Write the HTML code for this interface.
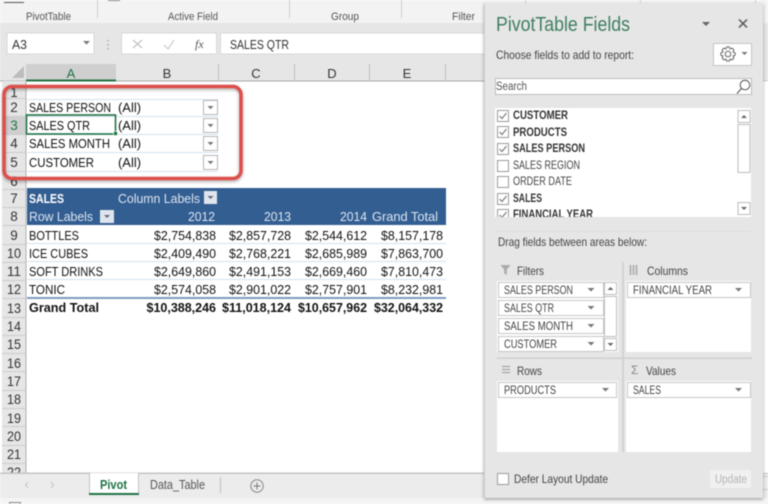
<!DOCTYPE html>
<html><head><meta charset="utf-8"><title>PivotTable</title>
<style>
html,body{margin:0;padding:0;background:#fff;width:768px;height:504px;overflow:hidden}
svg{display:block;filter:blur(.4px)}
text{font-family:"Liberation Sans",sans-serif;font-size:13px;fill:#333}
.d{fill:#111;font-size:13px}
.b{font-weight:bold;fill:#111;font-size:13px}
.w{fill:#fff}
.wb{fill:#fff;font-weight:bold}
.r{font-size:13.5px;fill:#333;text-anchor:middle}
.p{font-size:12px;fill:#444}
.pb{font-size:12px;fill:#333;font-weight:bold}
.rib{font-size:11px;fill:#555}
</style></head><body>
<svg width="768" height="504" viewBox="0 0 768 504" xmlns="http://www.w3.org/2000/svg">
<defs>
<g id="cb"><rect x=".5" y=".5" width="11" height="11" fill="#fff" stroke="#9a9a9a"/></g>
<g id="cc"><rect x=".5" y=".5" width="11" height="11" fill="#fff" stroke="#9a9a9a"/><path d="M2.5 6 L5 8.5 L9.5 3" fill="none" stroke="#777" stroke-width="1.1"/></g>
<g id="dd"><rect x=".5" y=".5" width="14" height="14" fill="#fff" stroke="#b5b5b5"/><path d="M4.5 6 h6 l-3 3.2z" fill="#777"/></g>
<g id="it"><path d="M0 0 h7 l-3.5 3.5z" fill="#777"/></g>
<filter id="sh" x="-10%" y="-10%" width="120%" height="120%"><feDropShadow dx="0" dy="1.5" stdDeviation="1.5" flood-color="#000" flood-opacity=".35"/></filter>
</defs>

<!-- Ribbon -->
<rect x="0" y="0" width="768" height="23" fill="#f3f3f3"/>
<rect x="0" y="23" width="768" height="41" fill="#e6e6e6"/>
<text class="rib" x="26" y="20" textLength="45" lengthAdjust="spacingAndGlyphs">PivotTable</text>
<text class="rib" x="168" y="20" textLength="50" lengthAdjust="spacingAndGlyphs">Active Field</text>
<text class="rib" x="331" y="20" textLength="28" lengthAdjust="spacingAndGlyphs">Group</text>
<text class="rib" x="452" y="20" textLength="23" lengthAdjust="spacingAndGlyphs">Filter</text>
<path d="M97.5 0V18M289.5 0V18M401.5 0V18M525.5 0V3M640.5 0V3M755.5 0V18" stroke="#cfcfcf"/>
<rect x="4" y="2" width="20" height="1" fill="#555"/><rect x="108" y="0" width="12" height="1" fill="#888"/>

<!-- Formula bar -->
<rect x="7" y="33" width="87" height="21" fill="#fff" stroke="#d8d8d8"/>
<text x="12" y="49" textLength="15" lengthAdjust="spacingAndGlyphs" fill="#444">A3</text>
<path d="M83 41 h7 l-3.5 3.5z" fill="#777"/>
<path d="M108 40v1.5M108 44v1.5M108 48v1.5" stroke="#aaa" stroke-width="1.5"/>
<rect x="121.5" y="33" width="95" height="21" fill="#fff" stroke="#d8d8d8"/>
<path d="M133 40 L142 48 M142 40 L133 48" stroke="#c4c4c4" stroke-width="1.3"/>
<path d="M164 45 L168 49 L174 40" stroke="#d0d0d0" stroke-width="1.3" fill="none"/>
<text x="195" y="48" style="font-family:'Liberation Serif',serif;font-style:italic;font-size:12px;fill:#555">fx</text>
<rect x="220.5" y="33" width="264" height="21" fill="#fff" stroke="#d8d8d8"/>
<text x="230" y="49" textLength="59" lengthAdjust="spacingAndGlyphs" fill="#444" style="font-size:12.5px">SALES QTR</text>

<!-- Column headers -->
<rect x="0" y="64" width="768" height="17" fill="#e6e6e6"/>
<rect x="0" y="80.5" width="768" height="1" fill="#a8a8a8"/>
<path d="M24 66 V78 H12z" fill="#bdbdbd"/>
<rect x="26" y="64" width="90" height="17" fill="#cfcfcf"/>
<rect x="26" y="79.5" width="90" height="2" fill="#217346"/>
<path d="M218.5 64V81M294.5 64V81M369.5 64V81M445.5 64V81" stroke="#bfbfbf"/>
<text x="71" y="78" text-anchor="middle" style="font-size:13px;fill:#217346">A</text>
<text x="167" y="78" text-anchor="middle">B</text>
<text x="256" y="78" text-anchor="middle">C</text>
<text x="332" y="78" text-anchor="middle">D</text>
<text x="407" y="78" text-anchor="middle">E</text>

<!-- Row header -->
<rect x="2" y="81" width="24" height="392" fill="#e6e6e6"/>
<rect x="25.5" y="81" width="1" height="392" fill="#b0b0b0"/>
<rect x="2" y="116" width="24" height="18" fill="#cfcfcf"/>
<path d="M2 98.5H26M2 116.5H26M2 134.5H26M2 152.5H26M2 171.5H26M2 189.5H26M2 207.5H26M2 225.5H26M2 244.5H26M2 262.5H26M2 280.5H26M2 298.5H26M2 317.5H26M2 335.5H26M2 353.5H26M2 371.5H26M2 390.5H26M2 408.5H26M2 426.5H26M2 445.5H26M2 463.5H26" stroke="#c9ccd0"/>
<text class="r" x="14" y="97">1</text>
<text class="r" x="14" y="112">2</text>
<text class="r" x="14" y="130" style="fill:#217346">3</text>
<text class="r" x="14" y="148">4</text>
<text class="r" x="14" y="167">5</text>
<text class="r" x="14" y="186">6</text>
<text class="r" x="14" y="203">7</text>
<text class="r" x="14" y="221">8</text>
<text class="r" x="14" y="240">9</text>
<text class="r" x="14" y="258" textLength="14" lengthAdjust="spacingAndGlyphs">10</text>
<text class="r" x="14" y="276" textLength="14" lengthAdjust="spacingAndGlyphs">11</text>
<text class="r" x="14" y="294" textLength="14" lengthAdjust="spacingAndGlyphs">12</text>
<text class="r" x="14" y="313" textLength="14" lengthAdjust="spacingAndGlyphs">13</text>
<text class="r" x="14" y="331" textLength="14" lengthAdjust="spacingAndGlyphs">14</text>
<text class="r" x="14" y="349" textLength="14" lengthAdjust="spacingAndGlyphs">15</text>
<text class="r" x="14" y="368" textLength="14" lengthAdjust="spacingAndGlyphs">16</text>
<text class="r" x="14" y="386" textLength="14" lengthAdjust="spacingAndGlyphs">17</text>
<text class="r" x="14" y="404" textLength="14" lengthAdjust="spacingAndGlyphs">18</text>
<text class="r" x="14" y="423" textLength="14" lengthAdjust="spacingAndGlyphs">19</text>
<text class="r" x="14" y="441" textLength="14" lengthAdjust="spacingAndGlyphs">20</text>
<text class="r" x="14" y="459" textLength="14" lengthAdjust="spacingAndGlyphs">21</text>
<text class="r" x="14" y="477" textLength="14" lengthAdjust="spacingAndGlyphs">22</text>

<!-- Filter area -->
<path d="M27 99.5H218M27 116.5H218M27 134.5H218M27 152.5H218M27 171.5H218" stroke="#d6e0ec"/>
<text class="d" x="29" y="112" textLength="82" lengthAdjust="spacingAndGlyphs">SALES PERSON</text>
<text class="d" x="29" y="130" textLength="61" lengthAdjust="spacingAndGlyphs">SALES QTR</text>
<text class="d" x="29" y="148" textLength="81" lengthAdjust="spacingAndGlyphs">SALES MONTH</text>
<text class="d" x="29" y="167" textLength="65" lengthAdjust="spacingAndGlyphs">CUSTOMER</text>
<text class="d" x="118" y="112" textLength="23" lengthAdjust="spacingAndGlyphs">(All)</text>
<text class="d" x="118" y="130" textLength="23" lengthAdjust="spacingAndGlyphs">(All)</text>
<text class="d" x="118" y="148" textLength="23" lengthAdjust="spacingAndGlyphs">(All)</text>
<text class="d" x="118" y="167" textLength="23" lengthAdjust="spacingAndGlyphs">(All)</text>
<use href="#dd" x="203" y="100"/>
<use href="#dd" x="203" y="118"/>
<use href="#dd" x="203" y="136"/>
<use href="#dd" x="203" y="155"/>
<rect x="26.5" y="115" width="89" height="19" fill="none" stroke="#217346" stroke-width="1.6"/>
<rect x="113.5" y="131.5" width="4" height="4" fill="#217346" stroke="#fff" stroke-width=".7"/>
<rect x="4" y="86.5" width="237" height="92" rx="8" fill="none" stroke="#dc4f4b" stroke-width="3.5" filter="url(#sh)"/>

<!-- Pivot table -->
<rect x="27" y="188" width="419" height="37" fill="#335e92"/>
<text class="wb" x="29" y="203" textLength="35" lengthAdjust="spacingAndGlyphs">SALES</text>
<text class="w" x="118" y="203" textLength="82" lengthAdjust="spacingAndGlyphs" style="fill:#dbe5f1">Column Labels</text>
<rect x="204" y="191" width="13" height="13" fill="#dfe5ec"/><path d="M207.5 196 h6 l-3 3z" fill="#667"/>
<text class="w" x="29" y="221" textLength="64" lengthAdjust="spacingAndGlyphs" style="fill:#dbe5f1">Row Labels</text>
<rect x="100" y="210" width="14" height="13" fill="#dfe5ec"/><path d="M104 215 h6 l-3 3z" fill="#667"/>
<text class="w" x="188" y="221" textLength="27" lengthAdjust="spacingAndGlyphs" style="fill:#dbe5f1">2012</text>
<text class="w" x="264" y="221" textLength="27" lengthAdjust="spacingAndGlyphs" style="fill:#dbe5f1">2013</text>
<text class="w" x="340" y="221" textLength="27" lengthAdjust="spacingAndGlyphs" style="fill:#dbe5f1">2014</text>
<text class="w" x="372" y="221" textLength="66" lengthAdjust="spacingAndGlyphs" style="fill:#dbe5f1">Grand Total</text>
<path d="M27 243.5H446M27 261.5H446M27 279.5H446" stroke="#d6e0ec"/>
<rect x="27" y="297" width="419" height="2" fill="#7e9cc2"/>

<text class="d" x="29" y="240" textLength="50" lengthAdjust="spacingAndGlyphs">BOTTLES</text>
<text class="d" x="29" y="258" textLength="59" lengthAdjust="spacingAndGlyphs">ICE CUBES</text>
<text class="d" x="29" y="276" textLength="74" lengthAdjust="spacingAndGlyphs">SOFT DRINKS</text>
<text class="d" x="29" y="294" textLength="36" lengthAdjust="spacingAndGlyphs">TONIC</text>
<text class="b" x="29" y="312" textLength="70" lengthAdjust="spacingAndGlyphs">Grand Total</text>

<text class="d" x="154" y="240" textLength="62" lengthAdjust="spacingAndGlyphs">$2,754,838</text>
<text class="d" x="229" y="240" textLength="62" lengthAdjust="spacingAndGlyphs">$2,857,728</text>
<text class="d" x="305" y="240" textLength="62" lengthAdjust="spacingAndGlyphs">$2,544,612</text>
<text class="d" x="381" y="240" textLength="62" lengthAdjust="spacingAndGlyphs">$8,157,178</text>
<text class="d" x="154" y="258" textLength="62" lengthAdjust="spacingAndGlyphs">$2,409,490</text>
<text class="d" x="229" y="258" textLength="62" lengthAdjust="spacingAndGlyphs">$2,768,221</text>
<text class="d" x="305" y="258" textLength="62" lengthAdjust="spacingAndGlyphs">$2,685,989</text>
<text class="d" x="381" y="258" textLength="62" lengthAdjust="spacingAndGlyphs">$7,863,700</text>
<text class="d" x="154" y="276" textLength="62" lengthAdjust="spacingAndGlyphs">$2,649,860</text>
<text class="d" x="229" y="276" textLength="62" lengthAdjust="spacingAndGlyphs">$2,491,153</text>
<text class="d" x="305" y="276" textLength="62" lengthAdjust="spacingAndGlyphs">$2,669,460</text>
<text class="d" x="381" y="276" textLength="62" lengthAdjust="spacingAndGlyphs">$7,810,473</text>
<text class="d" x="154" y="294" textLength="62" lengthAdjust="spacingAndGlyphs">$2,574,058</text>
<text class="d" x="229" y="294" textLength="62" lengthAdjust="spacingAndGlyphs">$2,901,022</text>
<text class="d" x="305" y="294" textLength="62" lengthAdjust="spacingAndGlyphs">$2,757,901</text>
<text class="d" x="381" y="294" textLength="62" lengthAdjust="spacingAndGlyphs">$8,232,981</text>
<text class="b" x="146.5" y="312" textLength="69.5" lengthAdjust="spacingAndGlyphs">$10,388,246</text>
<text class="b" x="222" y="312" textLength="69" lengthAdjust="spacingAndGlyphs">$11,018,124</text>
<text class="b" x="298" y="312" textLength="69" lengthAdjust="spacingAndGlyphs">$10,657,962</text>
<text class="b" x="374" y="312" textLength="69" lengthAdjust="spacingAndGlyphs">$32,064,332</text>

<!-- Sheet tabs -->
<rect x="0" y="473" width="768" height="31" fill="#ececec"/>
<rect x="0" y="472.5" width="768" height="1.5" fill="#c4c4c4"/>
<rect x="0" y="498" width="768" height="6" fill="#f4f4f4"/>
<rect x="9.5" y="502.5" width="11" height="4" fill="none" stroke="#888"/>
<path d="M28 482 l-2.5 3 l2.5 3M51 482 l2.5 3 l-2.5 3" fill="none" stroke="#c4c4c4" stroke-width="1"/>
<rect x="90" y="473" width="48" height="21" fill="#fff"/>
<path d="M89.5 473V494M138.5 473V494" stroke="#c4c4c4"/>
<rect x="89" y="493" width="50" height="2" fill="#217346"/>
<text x="100" y="489" textLength="27" lengthAdjust="spacingAndGlyphs" style="font-weight:bold;fill:#217346;font-size:12.5px">Pivot</text>
<text x="150" y="489" textLength="55" lengthAdjust="spacingAndGlyphs" style="fill:#555;font-size:12.5px">Data_Table</text>
<path d="M220.5 477V493" stroke="#c0c0c0"/>
<circle cx="257" cy="486" r="6.2" fill="none" stroke="#888"/>
<path d="M253.5 486H260.5M257 482.5V489.5" stroke="#777"/>

<!-- Right of panel strip -->
<rect x="763" y="81" width="5" height="392" fill="#fff"/>
<path d="M763 476.5H768M763 489.5H768" stroke="#c9c9c9"/>

<!-- Panel -->
<rect x="484" y="3" width="279" height="495" fill="#e6e6e6" filter="url(#sh)"/>
<rect x="484" y="3" width="1" height="495" fill="#cfcfcf"/>
<text x="496" y="31" textLength="134" lengthAdjust="spacingAndGlyphs" style="font-size:20.5px;fill:#3f7f60">PivotTable Fields</text>
<path d="M702 22 h8 l-4 4z" fill="#666"/>
<path d="M739 19.5 L747 27.5 M747 19.5 L739 27.5" stroke="#555" stroke-width="1.5"/>
<text class="p" x="496" y="59" textLength="138" lengthAdjust="spacingAndGlyphs">Choose fields to add to report:</text>
<rect x="713.5" y="43.5" width="38" height="22" fill="#fff" stroke="#c6c6c6"/>
<g transform="translate(728,54)" fill="none" stroke="#666">
<circle r="2.8"/>
<path d="M7.09 -1.25L7.09 1.25L4.99 2.07L5.9 4.13L4.13 5.9L2.07 4.99L1.25 7.09L-1.25 7.09L-2.07 4.99L-4.13 5.9L-5.9 4.13L-4.99 2.07L-7.09 1.25L-7.09 -1.25L-4.99 -2.07L-5.9 -4.13L-4.13 -5.9L-2.07 -4.99L-1.25 -7.09L1.25 -7.09L2.07 -4.99L4.13 -5.9L5.9 -4.13L4.99 -2.07Z"/>
</g>
<path d="M741.5 52 h6 l-3 3z" fill="#777"/>

<rect x="495.5" y="78.5" width="256" height="16" fill="#fff" stroke="#bdbdbd"/>
<text x="496" y="90" textLength="31" lengthAdjust="spacingAndGlyphs" style="font-size:11.5px;fill:#555">Search</text>
<circle cx="745" cy="85" r="4.8" fill="none" stroke="#555"/>
<path d="M741.5 88.5 L737 93.5" stroke="#555" stroke-width="1.1"/>

<!-- Field list -->
<rect x="495" y="108" width="256" height="109" fill="#fff"/>
<use href="#cc" x="497" y="110"/>
<use href="#cc" x="497" y="126"/>
<use href="#cc" x="497" y="143"/>
<use href="#cb" x="497" y="176"/>
<use href="#cb" x="497" y="160"/>
<use href="#cc" x="497" y="193"/>
<text class="pb" x="513" y="119" textLength="55" lengthAdjust="spacingAndGlyphs">CUSTOMER</text>
<text class="pb" x="513" y="136" textLength="54" lengthAdjust="spacingAndGlyphs">PRODUCTS</text>
<text class="pb" x="513" y="152" textLength="72" lengthAdjust="spacingAndGlyphs">SALES PERSON</text>
<text class="p" x="513" y="169" textLength="67" lengthAdjust="spacingAndGlyphs">SALES REGION</text>
<text class="p" x="513" y="185" textLength="59" lengthAdjust="spacingAndGlyphs">ORDER DATE</text>
<text class="pb" x="513" y="202" textLength="29" lengthAdjust="spacingAndGlyphs">SALES</text>
<use href="#cc" x="497" y="209"/>
<text class="pb" x="513" y="218" textLength="80" lengthAdjust="spacingAndGlyphs">FINANCIAL YEAR</text>
<rect x="490" y="217" width="262" height="10" fill="#e6e6e6"/>
<rect x="737" y="108" width="14" height="109" fill="#fff"/>
<rect x="738" y="110.5" width="12" height="12" fill="#fff" stroke="#bcbcbc"/>
<path d="M741 118 h6 l-3 -3z" fill="#666"/>
<rect x="738" y="124.5" width="12" height="48" fill="#fff" stroke="#bcbcbc"/>
<rect x="738" y="202.5" width="12" height="12" fill="#fff" stroke="#bcbcbc"/>
<path d="M741 207 h6 l-3 3z" fill="#666"/>

<path d="M495 231.5H751" stroke="#d4d4d4" stroke-dasharray="1 1"/>
<text class="p" x="498" y="246" textLength="149" lengthAdjust="spacingAndGlyphs">Drag fields between areas below:</text>

<!-- Dividers -->
<rect x="622" y="262" width="2" height="190" fill="#d2d2d2"/>
<rect x="497" y="357.5" width="255" height="1.5" fill="#cfcfcf"/>

<!-- Filters -->
<path d="M500.5 265 h10 l-3.7 4.5 v5.5 l-2.6 -1.5 v-4z" fill="#aaa"/>
<text class="p" x="517" y="275" textLength="27" lengthAdjust="spacingAndGlyphs">Filters</text>
<rect x="497" y="281" width="121" height="71" fill="#fff"/>
<rect x="498.5" y="282.5" width="105" height="15" fill="#fff" stroke="#c6c6c6"/>
<rect x="498.5" y="300.5" width="105" height="15" fill="#fff" stroke="#c6c6c6"/>
<rect x="498.5" y="318.5" width="105" height="15" fill="#fff" stroke="#c6c6c6"/>
<rect x="498.5" y="336.5" width="105" height="15" fill="#fff" stroke="#c6c6c6"/>
<text class="p" x="504" y="294" textLength="69" lengthAdjust="spacingAndGlyphs">SALES PERSON</text>
<text class="p" x="504" y="312" textLength="50" lengthAdjust="spacingAndGlyphs">SALES QTR</text>
<text class="p" x="504" y="330" textLength="69" lengthAdjust="spacingAndGlyphs">SALES MONTH</text>
<text class="p" x="504" y="348" textLength="53" lengthAdjust="spacingAndGlyphs">CUSTOMER</text>
<use href="#it" x="587.5" y="288"/>
<use href="#it" x="587.5" y="306"/>
<use href="#it" x="587.5" y="324"/>
<use href="#it" x="587.5" y="342"/>
<rect x="604.5" y="282.5" width="12" height="12" fill="#fff" stroke="#bcbcbc"/>
<path d="M607.5 290 h6 l-3 -3z" fill="#666"/>
<rect x="604.5" y="296.5" width="12" height="40" fill="#fff" stroke="#bcbcbc"/>
<rect x="604.5" y="338.5" width="12" height="12" fill="#fff" stroke="#bcbcbc"/>
<path d="M607.5 343 h6 l-3 3z" fill="#666"/>

<!-- Columns -->
<path d="M630.5 265V275M633.5 265V275M636.5 265V275" stroke="#aaa" stroke-width="1.6"/>
<text class="p" x="647" y="275" textLength="41" lengthAdjust="spacingAndGlyphs">Columns</text>
<rect x="626" y="281" width="125" height="71" fill="#fff"/>
<rect x="627.5" y="282.5" width="123" height="15" fill="#fff" stroke="#c6c6c6"/>
<text class="p" x="633" y="294" textLength="79" lengthAdjust="spacingAndGlyphs">FINANCIAL YEAR</text>
<use href="#it" x="735" y="288"/>

<!-- Rows -->
<path d="M502 366.5H510M502 369.5H510M502 372.5H510" stroke="#999" stroke-width="1.1"/>
<text class="p" x="517" y="375" textLength="25" lengthAdjust="spacingAndGlyphs">Rows</text>
<rect x="497" y="381" width="121" height="71" fill="#fff"/>
<rect x="498.5" y="382.5" width="118" height="15" fill="#fff" stroke="#c6c6c6"/>
<text class="p" x="504" y="394" textLength="52" lengthAdjust="spacingAndGlyphs">PRODUCTS</text>
<use href="#it" x="602" y="388"/>

<!-- Values -->
<text x="631" y="374" style="font-size:12px;fill:#888">Σ</text>
<text class="p" x="646" y="375" textLength="30" lengthAdjust="spacingAndGlyphs">Values</text>
<rect x="626" y="381" width="125" height="71" fill="#fff"/>
<rect x="627.5" y="382.5" width="123" height="15" fill="#fff" stroke="#c6c6c6"/>
<text class="p" x="633" y="394" textLength="28" lengthAdjust="spacingAndGlyphs">SALES</text>
<use href="#it" x="735" y="388"/>

<!-- Footer -->
<use href="#cb" x="497" y="473"/>
<text class="p" x="514" y="483" textLength="94" lengthAdjust="spacingAndGlyphs">Defer Layout Update</text>
<rect x="710" y="470" width="41" height="18" fill="#f0f0f0"/>
<text x="715" y="483" textLength="32" lengthAdjust="spacingAndGlyphs" style="font-size:11.5px;fill:#b5b5b5">Update</text>
</svg>
</body></html>
